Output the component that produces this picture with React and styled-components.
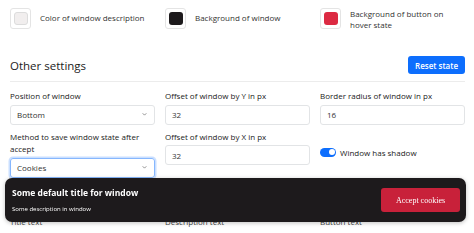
import React, { useState } from 'react'
import styled, { createGlobalStyle } from 'styled-components'

const GlobalStyle = createGlobalStyle`
  html, body { margin: 0; padding: 0; background: #fff; }
  body {
    font-family: "Open Sans", "Noto Sans", sans-serif;
    color: #212529;
    overflow: hidden;
  }
`

const Page = styled.div`
  padding: 8px 9px 0 10px;
`

const Grid = styled.div`
  display: grid;
  grid-template-columns: repeat(3, 1fr);
  column-gap: 10px;
  row-gap: ${p => p.$rowGap || 0}px;
  align-items: start;
  margin-top: ${p => p.$top || 0}px;
`

const ColorItem = styled.div`
  display: flex;
  align-items: flex-start;
  gap: 9px;
`

const Swatch = styled.div`
  width: 19px;
  height: 19px;
  flex: none;
  border: 1px solid #e4e4e4;
  border-radius: 3px;
  display: flex;
  align-items: center;
  justify-content: center;
  background: #fff;
`

const SwatchFill = styled.div`
  width: 14px;
  height: 13px;
  border-radius: 3px;
  background: ${p => p.$color};
  border: ${p => (p.$light ? '1px solid #dcdcdc' : 'none')};
  box-sizing: border-box;
`

const ColorLabel = styled.div`
  font-size: 8px;
  line-height: 11px;
  color: #333;
  padding-top: ${p => (p.$wrap ? 0 : 4)}px;
`

const Header = styled.div`
  display: flex;
  align-items: center;
  justify-content: space-between;
  margin-top: 26px;
  padding-bottom: 7px;
  border-bottom: 1px solid #ececec;
`

const Heading = styled.h4`
  margin: 0;
  font-size: 11.5px;
  font-weight: 400;
  color: #222;
`

const PrimaryButton = styled.button`
  font-family: inherit;
  font-size: 8px;
  font-weight: 600;
  color: #fff;
  background: #0d6efd;
  border: none;
  border-radius: 3px;
  height: 18px;
  padding: 0 7px;
`

const Field = styled.div`
  display: flex;
  flex-direction: column;
`

const Label = styled.label`
  font-size: 8px;
  line-height: 12.5px;
  color: #222;
  margin-bottom: 2px;
`

const Input = styled.div`
  height: 20px;
  box-sizing: border-box;
  border: 1px solid ${p => (p.$focus ? '#86b7fe' : '#e2e4e6')};
  box-shadow: ${p => (p.$focus ? '0 0 0 1.5px rgba(13,110,253,0.22)' : 'none')};
  border-radius: 3px;
  padding: 0 6px;
  display: flex;
  align-items: center;
  justify-content: space-between;
  font-size: 8px;
  color: #333;
`

const Chevron = () => (
  <svg width="7" height="5" viewBox="0 0 16 16" fill="none" stroke="#555" strokeWidth="2" strokeLinecap="round" strokeLinejoin="round">
    <path d="M3 5l5 5 5-5" />
  </svg>
)

const SwitchRow = styled.div`
  display: flex;
  align-items: center;
  gap: 4px;
  margin-top: 16px;
`

const Toggle = styled.button`
  width: 16px;
  height: 9px;
  border-radius: 5px;
  border: none;
  background: ${p => (p.$on ? '#0d6efd' : '#ccc')};
  display: flex;
  align-items: center;
  justify-content: ${p => (p.$on ? 'flex-end' : 'flex-start')};
  padding: 0 1.5px;
  box-sizing: border-box;
`

const Knob = styled.span`
  width: 6px;
  height: 6px;
  border-radius: 50%;
  background: #fff;
`

const SwitchText = styled.span`
  font-size: 8px;
  color: #222;
`

const BackLabel = styled.div`
  font-size: 8px;
  color: #444;
`

const CookieWindow = styled.div`
  position: fixed;
  left: 5px;
  right: 8px;
  bottom: 11px;
  height: 44px;
  box-sizing: border-box;
  background: #1d1a1c;
  border-radius: 7px;
  display: flex;
  align-items: center;
  justify-content: space-between;
  padding: 0 6px 0 7px;
  box-shadow: 0 1px 4px rgba(0, 0, 0, 0.25);
`

const CookieText = styled.div`
  display: flex;
  flex-direction: column;
  gap: 7px;
  color: #fff;
`

const CookieTitle = styled.div`
  font-size: 8.5px;
  font-weight: 700;
`

const CookieDesc = styled.div`
  font-size: 6px;
`

const AcceptButton = styled.button`
  font-family: "Liberation Serif", serif;
  font-size: 8px;
  color: #fff;
  background: #c8213a;
  border: none;
  border-radius: 3px;
  width: 79px;
  height: 24px;
`

export default function App() {
  const [shadow, setShadow] = useState(true)

  return (
    <>
      <GlobalStyle />
      <Page>
        <Grid>
          <ColorItem>
            <Swatch><SwatchFill $color="#f1eeee" $light /></Swatch>
            <ColorLabel>Color of window description</ColorLabel>
          </ColorItem>
          <ColorItem>
            <Swatch><SwatchFill $color="#1d1a1c" /></Swatch>
            <ColorLabel>Background of window</ColorLabel>
          </ColorItem>
          <ColorItem>
            <Swatch><SwatchFill $color="#dc2a42" /></Swatch>
            <ColorLabel $wrap>Background of button on hover state</ColorLabel>
          </ColorItem>
        </Grid>

        <Header>
          <Heading>Other settings</Heading>
          <PrimaryButton>Reset state</PrimaryButton>
        </Header>

        <Grid $top={8} $rowGap={6}>
          <Field>
            <Label>Position of window</Label>
            <Input>Bottom <Chevron /></Input>
          </Field>
          <Field>
            <Label>Offset of window by Y in px</Label>
            <Input>32</Input>
          </Field>
          <Field>
            <Label>Border radius of window in px</Label>
            <Input>16</Input>
          </Field>
          <Field>
            <Label>Method to save window state after accept</Label>
            <Input $focus>Cookies <Chevron /></Input>
          </Field>
          <Field>
            <Label>Offset of window by X in px</Label>
            <Input>32</Input>
          </Field>
          <SwitchRow>
            <Toggle $on={shadow} onClick={() => setShadow(!shadow)}><Knob /></Toggle>
            <SwitchText>Window has shadow</SwitchText>
          </SwitchRow>
        </Grid>

        <Grid $top={38}>
          <BackLabel>Title text</BackLabel>
          <BackLabel>Description text</BackLabel>
          <BackLabel>Button text</BackLabel>
        </Grid>
      </Page>

      <CookieWindow>
        <CookieText>
          <CookieTitle>Some default title for window</CookieTitle>
          <CookieDesc>Some description in window</CookieDesc>
        </CookieText>
        <AcceptButton>Accept cookies</AcceptButton>
      </CookieWindow>
    </>
  )
}
